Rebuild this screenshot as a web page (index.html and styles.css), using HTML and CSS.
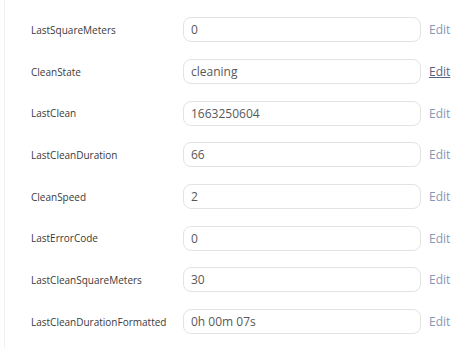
FILE: index.html
```html
<!DOCTYPE html>
<html lang="en">
<head>
    <meta charset="UTF-8">
    <meta name="viewport" content="width=device-width, initial-scale=1.0">
    <title>State</title>
    <link rel="stylesheet" href="styles.css">
</head>
<body>
    <div class="card">
        <div class="row">
            <label class="name">LastSquareMeters</label>
            <input class="value" type="text" value="0">
            <a href="#" class="edit">Edit</a>
        </div>
        <div class="row">
            <label class="name">CleanState</label>
            <input class="value" type="text" value="cleaning">
            <a href="#" class="edit hover">Edit</a>
        </div>
        <div class="row">
            <label class="name">LastClean</label>
            <input class="value" type="text" value="1663250604">
            <a href="#" class="edit">Edit</a>
        </div>
        <div class="row">
            <label class="name">LastCleanDuration</label>
            <input class="value" type="text" value="66">
            <a href="#" class="edit">Edit</a>
        </div>
        <div class="row">
            <label class="name">CleanSpeed</label>
            <input class="value" type="text" value="2">
            <a href="#" class="edit">Edit</a>
        </div>
        <div class="row">
            <label class="name">LastErrorCode</label>
            <input class="value" type="text" value="0">
            <a href="#" class="edit">Edit</a>
        </div>
        <div class="row">
            <label class="name">LastCleanSquareMeters</label>
            <input class="value" type="text" value="30">
            <a href="#" class="edit">Edit</a>
        </div>
        <div class="row">
            <label class="name">LastCleanDurationFormatted</label>
            <input class="value" type="text" value="0h 00m 07s">
            <a href="#" class="edit">Edit</a>
        </div>
    </div>
</body>
</html>
```

FILE: styles.css
```css
body {
    font-family: "Open Sans", "Liberation Sans", sans-serif;
    margin: 0;
    padding: 0;
    background-color: #fff;
    color: #333;
}
.card {
    margin-left: 4px;
    padding: 9px 0 0 26px;
    border-left: 1px solid #f0f0f0;
    height: 348px;
    box-sizing: border-box;
}
.row {
    display: flex;
    align-items: center;
    height: 41.7px;
}
.name {
    width: 152px;
    font-size: 10px;
    color: #3a3a3a;
}
.value {
    width: 238px;
    height: 25px;
    box-sizing: border-box;
    padding: 0 7px;
    border: 1px solid #e3e3e3;
    border-radius: 8px;
    font-family: inherit;
    font-size: 12px;
    color: #585858;
    background: #fff;
    outline: none;
}
.edit {
    margin-left: 8px;
    font-size: 12px;
    color: #8696b8;
    text-decoration: none;
}
.edit.hover {
    color: #56637f;
    text-decoration: underline;
}
```
